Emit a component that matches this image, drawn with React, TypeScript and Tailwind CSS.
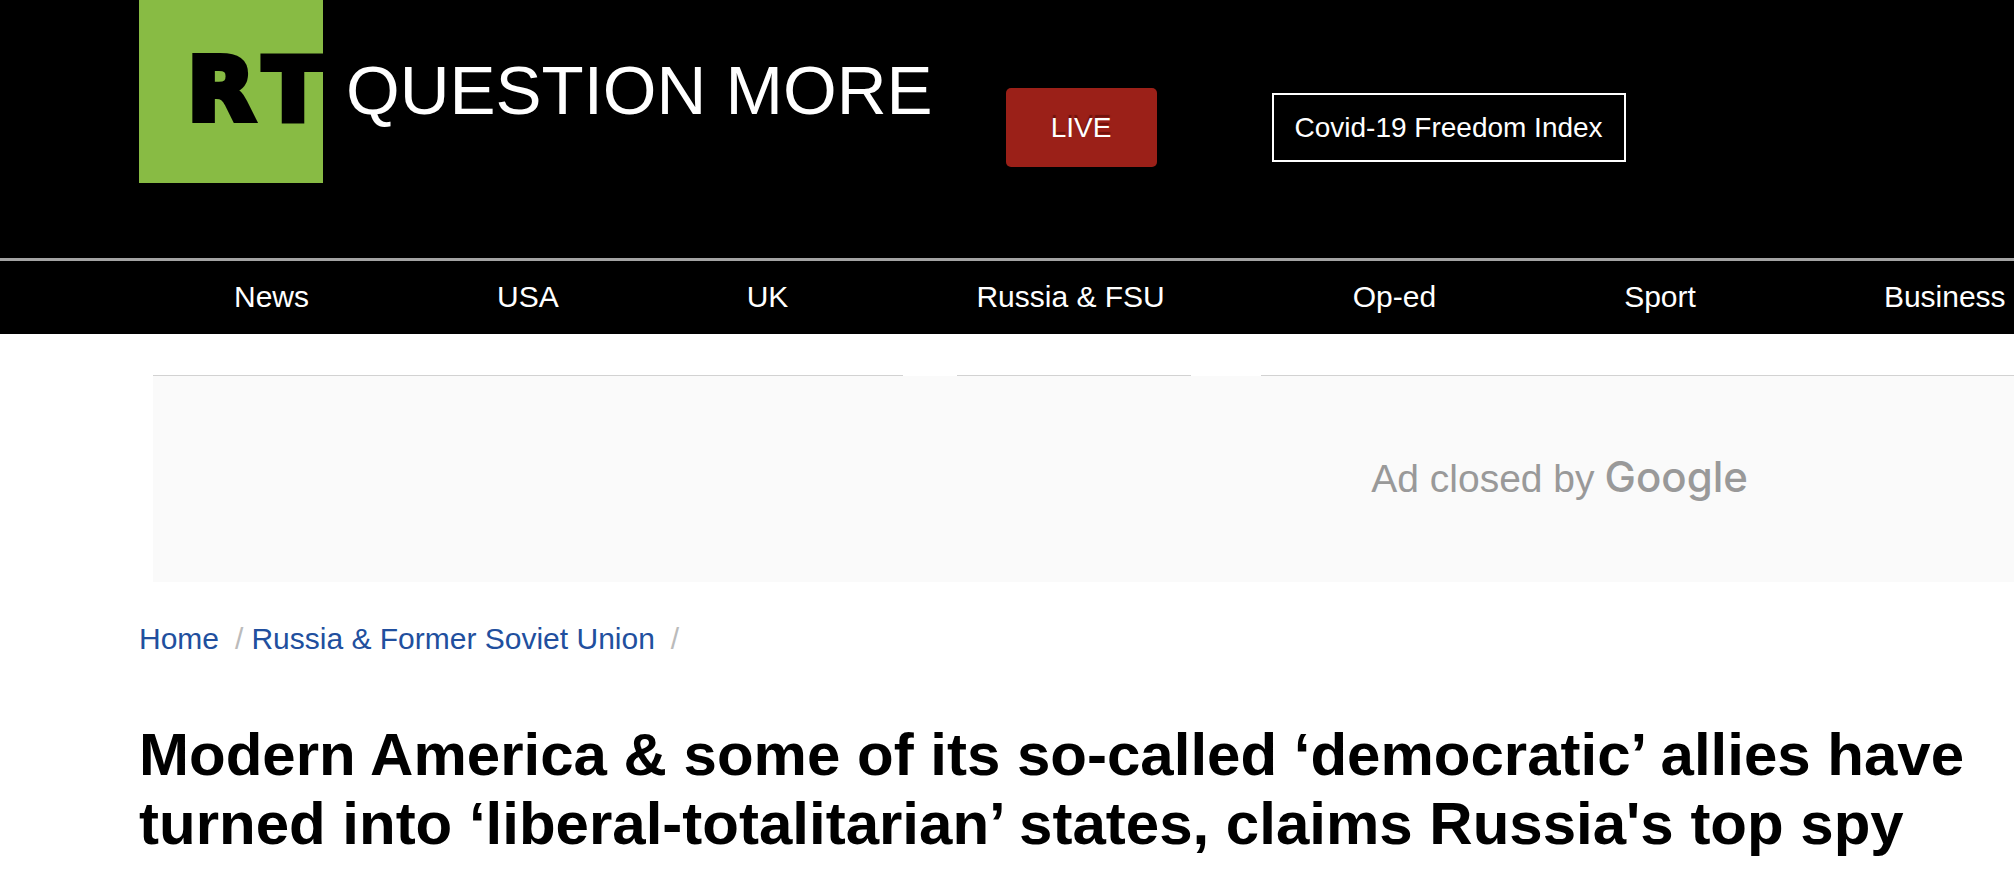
const navItems = [
  { label: "News", href: "#news" },
  { label: "USA", href: "#usa" },
  { label: "UK", href: "#uk" },
  { label: "Russia & FSU", href: "#russia" },
  { label: "Op-ed", href: "#op-ed" },
  { label: "Sport", href: "#sport" },
  { label: "Business", href: "#business" },
]

const breadcrumbs = [
  { label: "Home", href: "#home" },
  { label: "Russia & Former Soviet Union", href: "#russia" },
]

const Header = () => (
  <header className="bg-black text-white">
    <div className="flex h-[258px] items-start whitespace-nowrap pl-[139px]">
      <a href="#home" className="flex items-start gap-[23px]">
        <span className="flex h-[183px] w-[184px] justify-end gap-2 bg-[#88bb44] pt-[46px] font-['DejaVu_Sans',sans-serif] text-[88px] leading-[88px] font-bold text-black [-webkit-text-stroke:6px_black]">
          <span>R</span>
          <span>T</span>
        </span>
        <span className="pt-[53px] text-[69px] leading-[76px]">QUESTION MORE</span>
      </a>
      <a
        href="#live"
        className="mt-[88px] ml-[73px] flex h-[79px] w-[151px] items-center justify-center rounded-[5px] bg-[#9b2018] text-[28px] [text-shadow:0_-3px_1px_#6d120d]"
      >
        LIVE
      </a>
      <a
        href="#index"
        className="mt-[93px] ml-[115px] flex h-[69px] w-[354px] items-center justify-center border-2 border-white text-[28px]"
      >
        Covid-19 Freedom Index
      </a>
    </div>
    <nav className="overflow-hidden border-t-[3px] border-[#a3a3a3]">
      <ul className="flex h-[73px] items-center gap-[188px] pb-[2px] pl-[234px] text-[30px] whitespace-nowrap">
        {navItems.map((item) => (
          <li key={item.label}>
            <a href={item.href}>{item.label}</a>
          </li>
        ))}
      </ul>
    </nav>
  </header>
)

const AdBanner = () => (
  <aside className="mt-[41px] ml-[153px] bg-[#fafafa]">
    {/* hairline with two breaks in it */}
    <div className="h-px bg-[linear-gradient(to_right,#d2d2d2_750px,#fff_750px,#fff_804px,#d2d2d2_804px,#d2d2d2_1038px,#fff_1038px,#fff_1108px,#d2d2d2_1108px)]" />
    <p className="flex h-[206px] items-baseline justify-end gap-[10px] pt-[77px] pr-[266px] text-[39px] leading-[48px] whitespace-nowrap text-[#999]">
      Ad closed by
      <span className="font-[Inter,sans-serif] text-[42px] font-medium">Google</span>
    </p>
  </aside>
)

const App = () => {
  return (
    <div className="min-h-screen bg-white font-['Liberation_Sans',Arial,sans-serif]">
      <Header />
      <AdBanner />
      <main className="pr-10 pb-9 pl-[139px]">
        <ol className="mt-[37px] flex text-[30px] leading-[40px]">
          {breadcrumbs.map((crumb) => (
            <li key={crumb.label} className="flex">
              <a href={crumb.href} className="text-[#214f9e]">
                {crumb.label}
              </a>
              <span className="mr-2 ml-4 text-[#bbb]">/</span>
            </li>
          ))}
        </ol>
        <h1 className="mt-[61px] text-[60px] leading-[69px] font-bold text-black">
          Modern America & some of its so-called ‘democratic’ allies have turned into ‘liberal-totalitarian’ states,
          claims Russia's top spy
        </h1>
      </main>
    </div>
  )
}

export default App
